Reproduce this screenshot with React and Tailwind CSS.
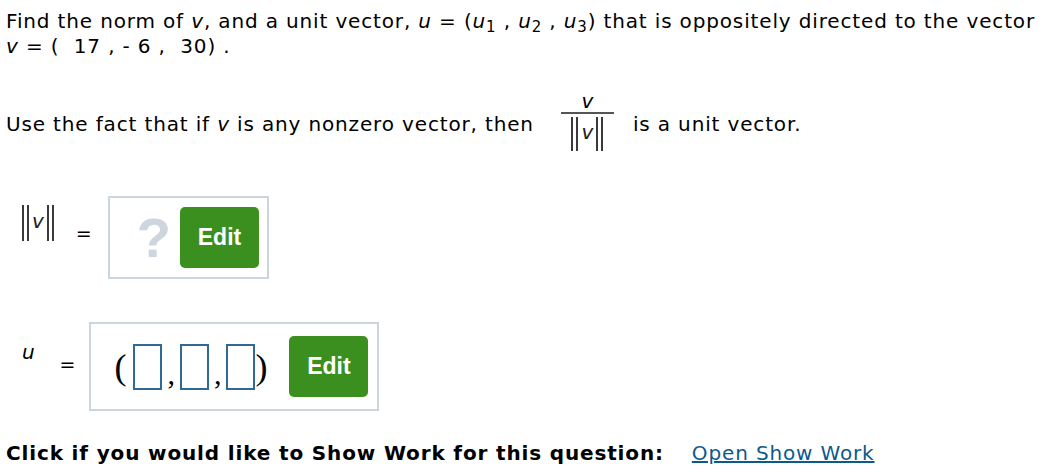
import React from 'react';

const FONT = { fontFamily: '"DejaVu Sans", Verdana, sans-serif' };

function Bars({ h }) {
  return (
    <span className="inline-flex gap-[3px]">
      <span className="w-[2px] bg-[#3a3a3a]" style={{ height: h }} />
      <span className="w-[2px] bg-[#3a3a3a]" style={{ height: h }} />
    </span>
  );
}

function Norm({ h }) {
  return (
    <span className="inline-flex items-center">
      <Bars h={h} />
      <span className="mx-[3px] mb-[4px] text-[20px] italic leading-none tracking-normal text-[#222]">v</span>
      <Bars h={h} />
    </span>
  );
}

function EditButton() {
  return (
    <button
      type="button"
      className="flex h-[61px] w-[79px] items-center justify-center rounded-[5px] bg-[#3a8f1e] text-[23px] font-bold tracking-normal text-white"
      style={{ fontFamily: '"Liberation Sans", Arial, sans-serif' }}
    >
      Edit
    </button>
  );
}

function Slot() {
  return <span className="inline-block h-[46px] w-[29px] border-2 border-[#2f6996] bg-white" />;
}

export default function App() {
  return (
    <div className="h-[476px] w-[1052px] bg-white text-[20px] leading-[25px] tracking-[0.85px] text-black" style={FONT}>
      <div className="pl-[6px] pt-[9px]">
        <p className="whitespace-nowrap">
          Find the norm of <i>v</i>, and a unit vector, <i>u</i> = (<i>u</i><sub className="text-[15px]">1</sub> , <i>u</i>
          <sub className="text-[15px]">2</sub> , <i>u</i><sub className="text-[15px]">3</sub>) that is oppositely directed to the vector
        </p>
        <p className="whitespace-pre"><i>v</i> = (  17 , - 6 ,  30) .</p>
      </div>

      <div className="mt-[31px] flex items-center pl-[6px]">
        <span className="mt-[2px]">Use the fact that if <i>v</i> is any nonzero vector, then</span>
        <span className="ml-[27px] flex w-[53px] flex-col items-center">
          <span className="text-[20px] italic leading-[22px] tracking-normal">v</span>
          <span className="h-[2px] w-[53px] bg-[#555]" />
          <span className="mt-[3px]"><Norm h={34} /></span>
        </span>
        <span className="ml-[19px] mt-[2px]">is a unit vector.</span>
      </div>

      <div className="mt-[39px] flex items-center pl-[22px]">
        <span className="mb-[24px]"><Norm h={36} /></span>
        <span className="mb-[8px] ml-[22px] text-[19px] tracking-normal">=</span>
        <div className="ml-[16px] flex h-[83px] w-[161px] items-center border-2 border-[#ccd5df] pl-[27px]">
          <span
            className="text-[56px] font-bold leading-none tracking-normal text-[#cdd5df]"
            style={{ fontFamily: '"Liberation Sans", Arial, sans-serif' }}
          >
            ?
          </span>
          <span className="ml-[9px]"><EditButton /></span>
        </div>
      </div>

      <div className="mt-[43px] flex items-center pl-[22px]">
        <span className="mb-[30px] text-[20px] italic leading-none">u</span>
        <span className="mb-[5px] ml-[24px] text-[19px] tracking-normal">=</span>
        <div className="ml-[14px] flex h-[89px] w-[290px] items-center border-2 border-[#ccd5df] pl-[23px]">
          <span
            className="flex items-center text-[36px] leading-none tracking-normal"
            style={{ fontFamily: '"Liberation Serif", "Times New Roman", serif' }}
          >
            <span className="mr-[7px]">(</span>
            <Slot />
            <span className="mx-[5px] mt-[14px] text-[30px]">,</span>
            <Slot />
            <span className="mx-[5px] mt-[14px] text-[30px]">,</span>
            <Slot />
            <span>)</span>
          </span>
          <span className="ml-[22px]"><EditButton /></span>
        </div>
      </div>

      <div className="mt-[30px] flex items-baseline pl-[6px]">
        <span className="font-bold">Click if you would like to Show Work for this question:</span>
        <a href="#" className="ml-[28px] text-[#0c5a8c] underline">Open Show Work</a>
      </div>
    </div>
  );
}
